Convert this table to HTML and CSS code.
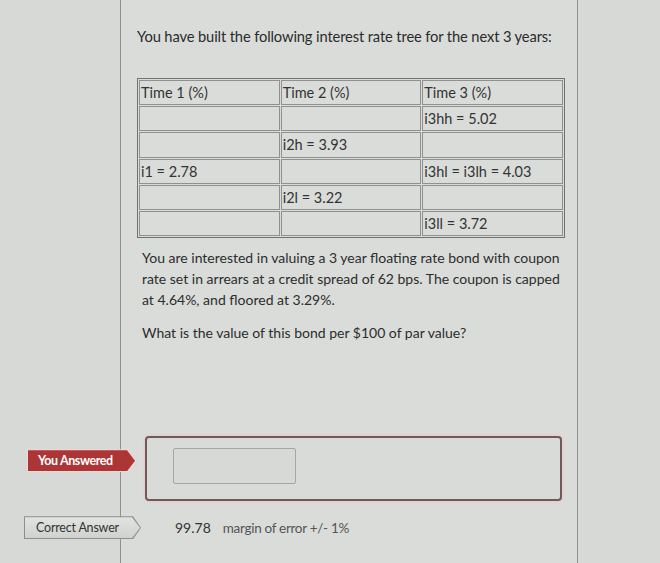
FILE: index.html
```html
<!DOCTYPE html>
<html>
<head>
<meta charset="utf-8">
<link rel="stylesheet" href="styles.css">
</head>
<body>
<div class="card">
  <p class="intro">You have built the following interest rate tree for the next 3 years:</p>
  <table class="tree">
    <tr><td>Time 1 (%)</td><td>Time 2 (%)</td><td>Time 3 (%)</td></tr>
    <tr><td></td><td></td><td>i3hh = 5.02</td></tr>
    <tr><td></td><td>i2h = 3.93</td><td></td></tr>
    <tr><td>i1 = 2.78</td><td></td><td>i3hl = i3lh = 4.03</td></tr>
    <tr><td></td><td>i2l = 3.22</td><td></td></tr>
    <tr><td></td><td></td><td>i3ll = 3.72</td></tr>
  </table>
  <p class="para">You are interested in valuing a 3 year floating rate bond with coupon rate set in arrears at a credit spread of 62 bps. The coupon is capped at 4.64%, and floored at 3.29%.</p>
  <p class="para q">What is the value of this bond per $100 of par value?</p>

  <div class="row answered">
    <div class="badge red"><span>You Answered</span></div>
    <div class="answer-box"><div class="input"></div></div>
  </div>
  <div class="row correct">
    <div class="badge gray"><span>Correct Answer</span></div>
    <div class="correct-text"><span class="num">99.78</span><span class="margin">margin of error +/- 1%</span></div>
  </div>
</div>
</body>
</html>
```

FILE: styles.css
```css
html, body {
  margin: 0;
  padding: 0;
}
body {
  background: #d6d9d6;
  font-family: Lato, "Open Sans", sans-serif;
  color: #2e2f30;
  width: 660px;
  height: 563px;
  overflow: hidden;
}
.card {
  margin-left: 120px;
  width: 458px;
  min-height: 563px;
  border-left: 1px solid #8d918f;
  border-right: 1px solid #8d918f;
  box-sizing: border-box;
  background: #d9dcd9;
}
.intro {
  margin: 0;
  padding: 27px 0 0 16px;
  font-size: 14.7px;
  line-height: 18px;
  letter-spacing: -0.12px;
  color: #2a2b2c;
}
.tree {
  margin: 33px 0 0 16px;
  width: 428px;
  border: 1px solid #6e716f;
  border-spacing: 1px;
  table-layout: fixed;
}
.tree td {
  height: 23.2px;
  border: 1px solid #8e918f;
  background: #dadcda;
  padding: 0 2px 0 1px;
  font-size: 14.5px;
  color: #333;
  vertical-align: middle;
}
.para {
  margin: 0;
  padding: 9px 0 0 21px;
  width: 425px;
  font-size: 14px;
  line-height: 21px;
  color: #2c2d2e;
}
.para.q {
  padding-top: 12px;
}
.row {
  display: flex;
  align-items: flex-start;
  margin-left: -94px;
}
.answered {
  margin-top: 93px;
}
.badge {
  height: 23px;
  clip-path: polygon(0 0, calc(100% - 8px) 0, 100% 50%, calc(100% - 8px) 100%, 0 100%);
  display: flex;
}
.badge span {
  flex: 1;
  margin: 1px;
  display: flex;
  align-items: center;
  padding-left: 10px;
  font-size: 12.5px;
  clip-path: polygon(0 0, calc(100% - 8px) 0, 100% 50%, calc(100% - 8px) 100%, 0 100%);
}
.badge.red {
  margin-top: 13px;
  width: 109px;
  background: #f2d5d5;
}
.badge.red span {
  background: #ad3535;
  color: #fff;
  font-weight: 700;
  letter-spacing: -0.4px;
}
.badge.gray {
  width: 117px;
  margin-left: -3px;
  background: #8c8f8d;
}
.badge.gray span {
  background: linear-gradient(#e2e4e2, #cfd2cf);
  color: #333;
  padding-left: 11px;
  letter-spacing: -0.2px;
}
.answer-box {
  margin-left: 9px;
  width: 417px;
  height: 65px;
  border: 2px solid #6d5a5a;
  border-radius: 4px;
  box-shadow: 0 0 2px 1px #f1c8c8;
  box-sizing: border-box;
  padding: 10px 0 0 26px;
  background: #d8dbd8;
}
.input {
  width: 123px;
  height: 36px;
  border: 1px solid #a4a7a5;
  border-radius: 2px;
  background: #d6d9d6;
  box-sizing: border-box;
}
.correct {
  align-items: center;
  margin-top: 15px;
}
.correct-text {
  margin-left: 34px;
  font-size: 14px;
  color: #333;
}
.correct-text .num {
  margin-right: 12px;
}
.correct-text .margin {
  font-size: 13.5px;
  color: #555;
  letter-spacing: -0.3px;
}
```
